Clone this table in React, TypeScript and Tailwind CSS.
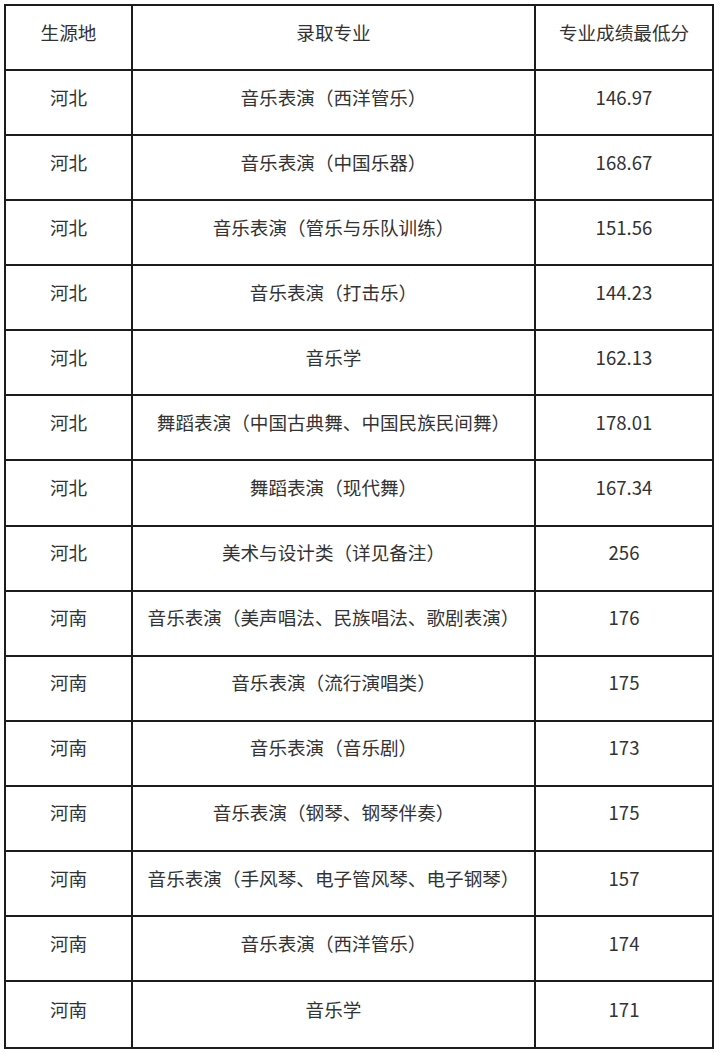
const rows: [string, string, string][] = [
  ['河北', '音乐表演（西洋管乐）', '146.97'],
  ['河北', '音乐表演（中国乐器）', '168.67'],
  ['河北', '音乐表演（管乐与乐队训练）', '151.56'],
  ['河北', '音乐表演（打击乐）', '144.23'],
  ['河北', '音乐学', '162.13'],
  ['河北', '舞蹈表演（中国古典舞、中国民族民间舞）', '178.01'],
  ['河北', '舞蹈表演（现代舞）', '167.34'],
  ['河北', '美术与设计类（详见备注）', '256'],
  ['河南', '音乐表演（美声唱法、民族唱法、歌剧表演）', '176'],
  ['河南', '音乐表演（流行演唱类）', '175'],
  ['河南', '音乐表演（音乐剧）', '173'],
  ['河南', '音乐表演（钢琴、钢琴伴奏）', '175'],
  ['河南', '音乐表演（手风琴、电子管风琴、电子钢琴）', '157'],
  ['河南', '音乐表演（西洋管乐）', '174'],
  ['河南', '音乐学', '171'],
]

function Row({ cells, last }: { cells: [string, string, string]; last?: boolean }) {
  return (
    <div className={`grid grid-cols-[127px_403px_1fr] ${last ? '' : 'border-b-2 border-[#1c1c1c]'}`}>
      <div className="flex items-center justify-center pb-[11px] border-r-2 border-[#1c1c1c]">{cells[0]}</div>
      <div className="flex items-center justify-center pb-[11px] border-r-2 border-[#1c1c1c]">{cells[1]}</div>
      <div className="flex items-center justify-center pb-[11px]">{cells[2]}</div>
    </div>
  )
}

export default function App() {
  return (
    <div className="w-[720px] h-[1052px] bg-white pt-[4px] pl-[4px]">
      <div
        className="w-[710px] h-[1045px] border-2 border-[#1c1c1c] grid grid-rows-[repeat(16,1fr)] text-[18.6px] text-[#333333] leading-none"
        style={{ fontFamily: '"Noto Sans CJK SC", "Noto Sans", sans-serif' }}
      >
        <Row cells={['生源地', '录取专业', '专业成绩最低分']} />
        {rows.map((r, i) => (
          <Row key={i} cells={r} last={i === rows.length - 1} />
        ))}
      </div>
    </div>
  )
}
